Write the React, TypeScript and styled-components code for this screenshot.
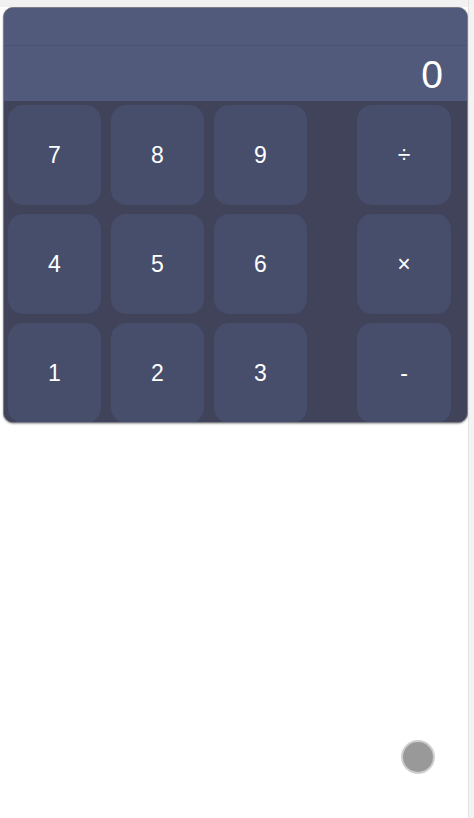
import React from "react";
import styled, { createGlobalStyle } from "styled-components";

const Global = createGlobalStyle`
  html, body { margin: 0; padding: 0; background: #ffffff; }
  body { font-family: "Liberation Sans", Arial, sans-serif; }
`;

const Page = styled.div`
  display: flex;
  width: 474px;
  height: 818px;
  overflow: hidden;
  position: relative;
`;

const Main = styled.div`
  flex: 1;
  display: flex;
  flex-direction: column;
`;

const TopStrip = styled.div`
  height: 7px;
  background: #f1f1f1;
`;

const Track = styled.div`
  width: 5px;
  background: #f3f3f3;
  border-left: 1px solid #e2e2e2;
`;

const Calculator = styled.div`
  margin-left: 3px;
  width: 465px;
  height: 416px;
  box-sizing: border-box;
  border: 1px solid #7d7f88;
  border-radius: 10px;
  overflow: hidden;
  display: flex;
  flex-direction: column;
  background: #404359;
  box-shadow: 0 1px 2px rgba(0, 0, 0, 0.35);
`;

const History = styled.div`
  height: 37px;
  flex-shrink: 0;
  background: #525a7c;
  border-bottom: 1px solid #4a5173;
`;

const Display = styled.div`
  height: 55px;
  flex-shrink: 0;
  background: #525a7c;
  color: #ffffff;
  font-size: 39px;
  display: flex;
  align-items: center;
  justify-content: flex-end;
  padding-right: 24px;
  padding-top: 2px;
  box-sizing: border-box;
`;

const Keypad = styled.div`
  flex-shrink: 0;
  display: grid;
  grid-template-columns: repeat(3, 93px) 1fr 94px;
  grid-auto-rows: 100px;
  column-gap: 10px;
  row-gap: 9px;
  padding: 4px 16px 0 4px;
  background: #404359;
`;

const Key = styled.button<{ $col?: number }>`
  grid-column: ${(p) => p.$col ?? "auto"};
  border: none;
  border-radius: 15px;
  background: #464e6b;
  color: #ffffff;
  font-family: "Liberation Sans", Arial, sans-serif;
  font-size: 23px;
  display: flex;
  align-items: center;
  justify-content: center;
  padding: 0;
`;

const Bubble = styled.div`
  position: absolute;
  left: 403px;
  top: 742px;
  width: 30px;
  height: 30px;
  border-radius: 50%;
  background: #999999;
  box-shadow: 0 0 0 2px #cfcfcf;
`;

const rows = [
  ["7", "8", "9", "÷"],
  ["4", "5", "6", "×"],
  ["1", "2", "3", "-"],
];

export default function App() {
  return (
    <>
      <Global />
      <Page>
        <Main>
          <TopStrip />
          <Calculator>
            <History />
            <Display>0</Display>
            <Keypad>
              {rows.map((row) =>
                row.map((k, i) => (
                  <Key key={k} $col={i === 3 ? 5 : i + 1}>
                    {k}
                  </Key>
                ))
              )}
            </Keypad>
          </Calculator>
        </Main>
        <Track />
        <Bubble />
      </Page>
    </>
  );
}
